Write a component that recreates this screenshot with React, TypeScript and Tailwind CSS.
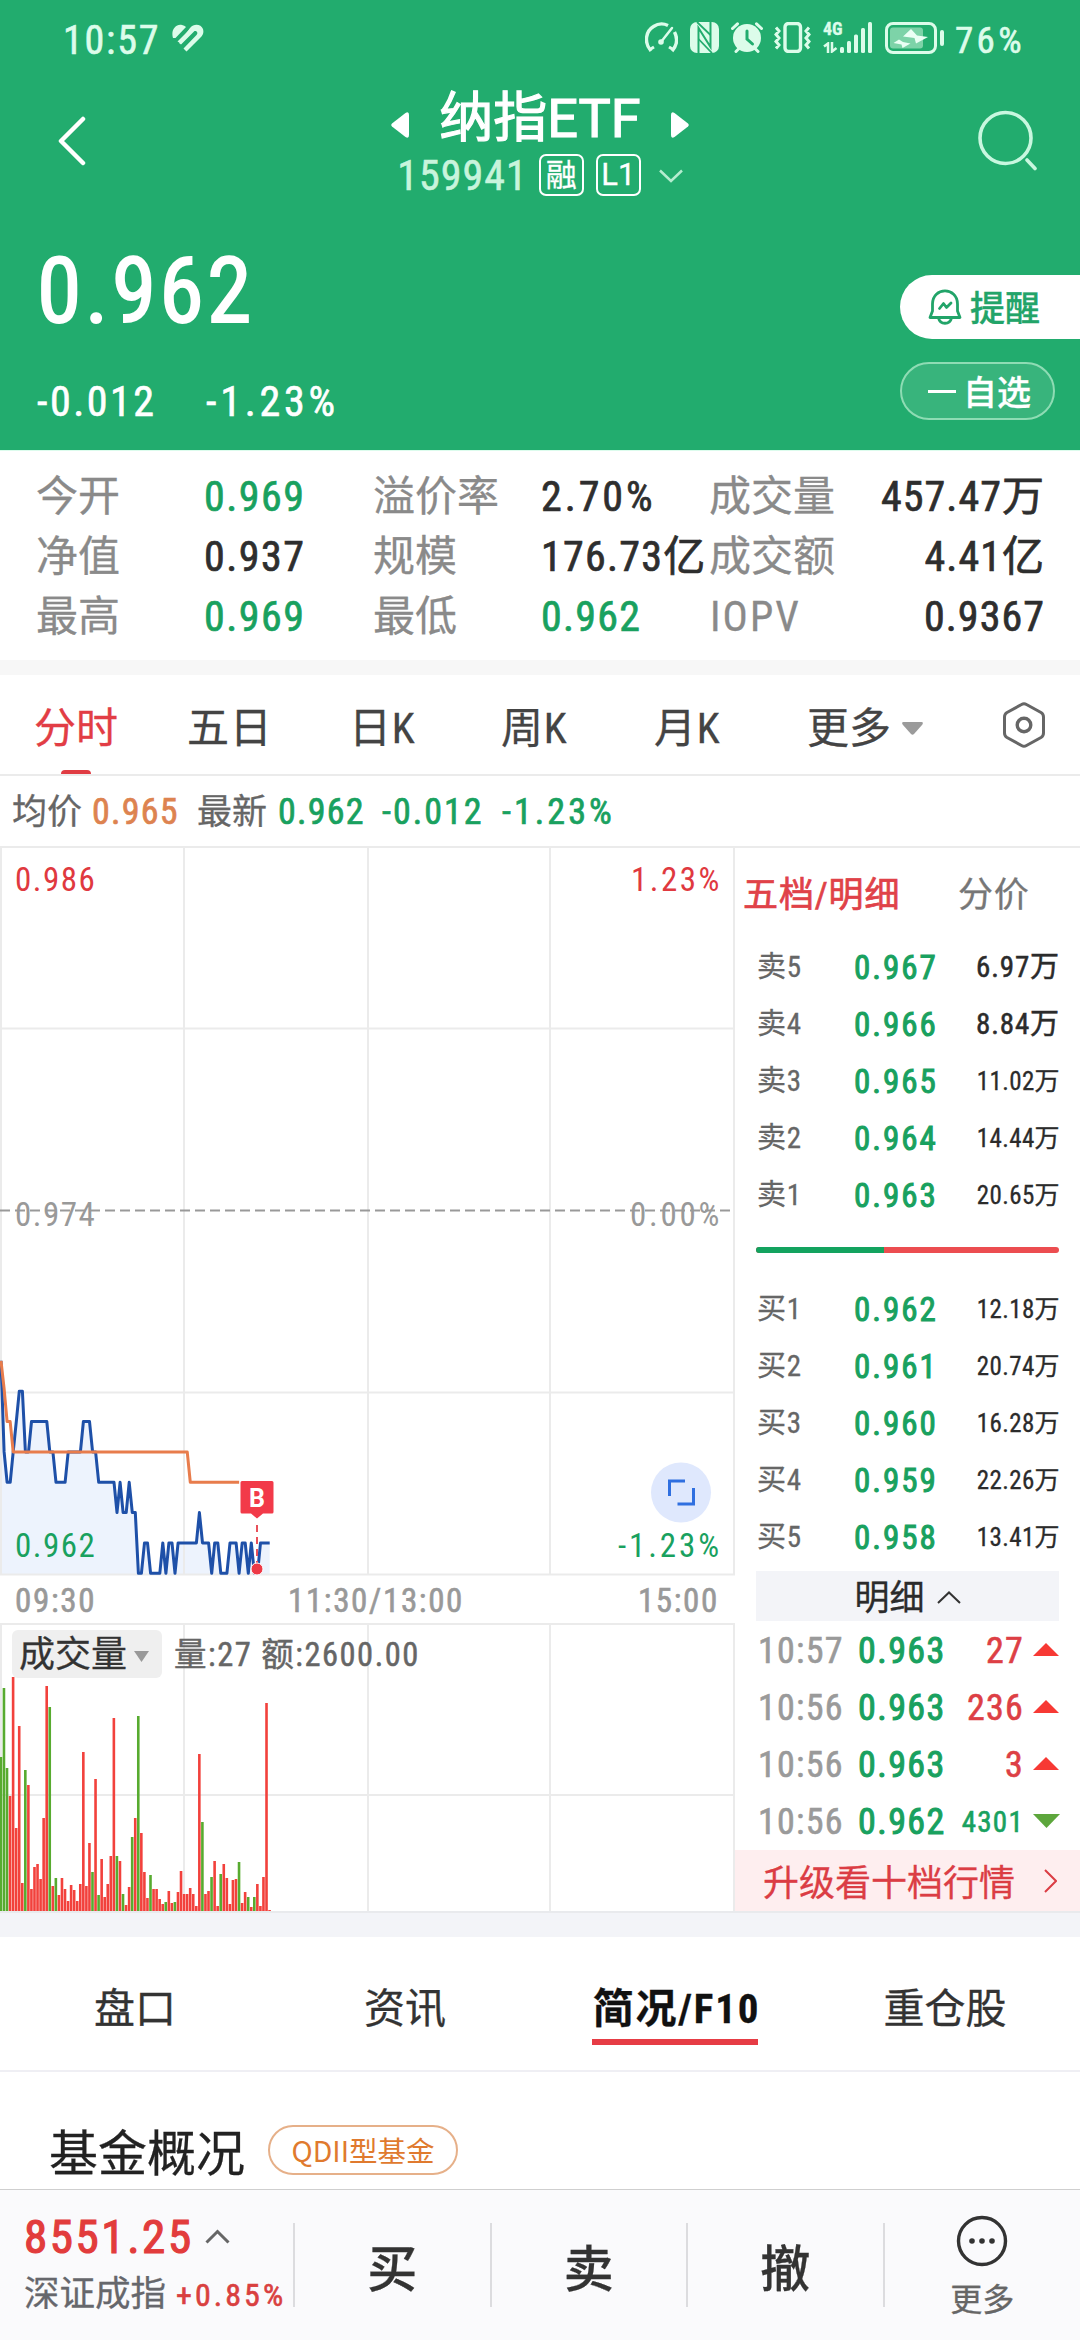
import clsx from "clsx";

const STEP = 3.053;

// price level per minute, 0 = bottom of the chart
const PRICE =
  "7433456644" +
  "5555554433" +
  "3344444555" +
  "4433333323" +
  "2232200110" +
  "0001011011" +
  "1111121110" +
  "1100011101" +
  "101001111";

const AVERAGE: [number, number][] = [
  [0, 7],
  [1, 6.1],
  [2, 5],
  [3, 5],
  [4, 4],
  [61, 4],
  [62, 3],
  [78, 3],
];

// bar height per minute, negative = down (green)
const VOLUME = [
  -154, -223, -143, 115, 234, 83, 185, 28, -141, 126, 22, 44, 47, 32, 93, 225, -204, 25, -33, 16,
  33, 22, 10, 26, 21, 10, 27, 159, 25, 68, -39, 132, -16, 52, 14, 27, 55, 193, -55, 50,
  -17, 6, 24, -74, 93, -195, 78, 39, 13, -36, 22, 22, 12, 7, -9, 20, 8, -9, 19, 40,
  17, 17, 23, 17, 5, 157, -89, 17, 20, -34, 50, 5, -37, 47, 33, 7, 31, 32, -49, 8,
  19, -14, 4, -14, 27, 5, 34, 208, 1,
];

const stats = [
  ["今开", "0.969", true, "溢价率", "2.70%", false, "成交量", "457.47万"],
  ["净值", "0.937", false, "规模", "176.73亿", false, "成交额", "4.41亿"],
  ["最高", "0.969", true, "最低", "0.962", true, "IOPV", "0.9367"],
] as const;

const periods = [
  { label: "五日", width: "w-[162px]" },
  { label: "日K", width: "w-[152px]" },
  { label: "周K", width: "w-[153px]" },
  { label: "月K", width: "w-[153px]" },
];

const sells = [
  ["卖5", "0.967", "6.97万"],
  ["卖4", "0.966", "8.84万"],
  ["卖3", "0.965", "11.02万"],
  ["卖2", "0.964", "14.44万"],
  ["卖1", "0.963", "20.65万"],
];

const buys = [
  ["买1", "0.962", "12.18万"],
  ["买2", "0.961", "20.74万"],
  ["买3", "0.960", "16.28万"],
  ["买4", "0.959", "22.26万"],
  ["买5", "0.958", "13.41万"],
];

const ticks = [
  { time: "10:57", price: "0.963", amount: "27", up: true },
  { time: "10:56", price: "0.963", amount: "236", up: true },
  { time: "10:56", price: "0.963", amount: "3", up: true },
  { time: "10:56", price: "0.962", amount: "4301", up: false },
];

const px = (m: number) => 1 + m * STEP;
const py = (level: number) => 727.3 - level * 30.35;

const StatusBar = () => (
  <div className="flex h-[78px] items-center pl-[63px] pt-[3px] text-[#dcfcea]">
    <span className="w-[109px] text-[40px] tracking-[0.045em] [-webkit-text-stroke:0.6px]">10:57</span>
    <svg className="-mt-[6px]" width="32" height="28" viewBox="0 0 32 28" fill="currentColor">
      <path d="M1 14C-1.500 6 4 -.5 10 1Q12.500 1.500 14 3L3.500 14z" />
      <path d="M5.500 17.500L18 5Q19.500 3.500 20.500 4.500T20.500 7.500L9 19.500z" />
      <path d="M14.500 27.500L11.500 24.500L24.500 11Q26.500 8.500 24 7L22.500 7L9 20.500L7 19L18 4C22 -1 29 0 31 5C32 9 31 11 28.500 13.500z" />
    </svg>
    <div className="-mt-[6px] ml-auto flex items-center">
      <svg width="33" height="31" viewBox="0 0 33 31" fill="none" stroke="currentColor" strokeWidth="3.400">
        <path d="M6 29C-1.500 20 1 9 8.500 4.500C13 1.500 18 1 23 3.500" />
        <path d="M29.500 10C33 17 31.500 24 27 29" />
        <path d="M16 20L27 6" strokeWidth="2.500" strokeLinecap="round" />
        <circle cx="16" cy="20" r="2.800" fill="currentColor" stroke="none" />
        <path d="M4 28l5-3M29 28l-5-3" strokeWidth="3" />
      </svg>
      <svg className="ml-3" width="29" height="31" viewBox="0 0 29 31">
        <rect width="29" height="31" rx="7" fill="currentColor" />
        <path d="M8.500 31V6L20.500 25V0" fill="none" stroke="#22ac6e" strokeWidth="2" />
        <path d="M7 0L20.500 13" fill="none" stroke="#22ac6e" strokeWidth="1.800" />
        <path d="M8.500 17L22 31" fill="none" stroke="#22ac6e" strokeWidth="1.800" />
      </svg>
      <svg className="ml-3" width="32" height="31" viewBox="0 0 32 31" fill="none" stroke="currentColor" strokeWidth="3" strokeLinecap="round">
        <circle cx="16" cy="16" r="14" fill="currentColor" stroke="none" />
        <path d="M1.500 6.500L6.500 1.800M30.500 6.500L25.500 1.800M5 29.500l3-3M27 29.500l-3-3" />
        <path d="M16 9v8l5.500 5" stroke="#22ac6e" />
      </svg>
      <svg className="ml-[11px]" width="37" height="31" viewBox="0 0 37 31" fill="none" stroke="currentColor" strokeWidth="3">
        <rect x="11" y="1.500" width="15.500" height="28" rx="3.500" strokeWidth="3.400" />
        <path d="M2 5.500l3 3.500l-3 3.500l3 3.500l-3 3.500l3 3.500l-3 3.500M35 5.500l-3 3.500l3 3.500l-3 3.500l3 3.500l-3 3.500l3 3.500" />
      </svg>
      <div className="ml-3 flex h-[31px] items-end">
        <div className="flex h-[31px] w-[17px] flex-col justify-between">
          <span className="text-[18px] font-bold leading-[14px]">4G</span>
          <svg width="15" height="11" viewBox="0 0 15 11" fill="none" stroke="currentColor" strokeWidth="2.500">
            <path d="M1 4.500L5 1.500V11M9 0V9.500L13.500 6" />
          </svg>
        </div>
        <svg width="32" height="31" viewBox="0 0 32 31" fill="currentColor">
          <rect x="0" y="25" width="4" height="6" rx="1.500" />
          <rect x="7" y="19" width="4" height="12" rx="1.500" />
          <rect x="14" y="12.500" width="4" height="18.500" rx="1.500" />
          <rect x="21" y="6" width="4" height="25" rx="1.500" />
          <rect x="28" y="0" width="4" height="31" rx="1.500" />
        </svg>
      </div>
      <svg className="ml-[13px]" width="59" height="32" viewBox="0 0 59 32">
        <rect x="1.500" y="1.500" width="49" height="29" rx="6.500" fill="none" stroke="currentColor" strokeWidth="3" />
        <rect x="5" y="5.500" width="33" height="21" rx="3" fill="#7dd3a8" />
        <path d="M26 7L32 13.500L43 15L31 21.500L29.500 16L18 14.500zM14 17.500L18 20L25.500 21.500L17.500 26L16.500 22.500L8.500 21z" fill="#eafff4" />
        <rect x="55" y="8" width="4" height="16" rx="2" fill="currentColor" />
      </svg>
    </div>
    <span className="ml-[11px] w-[125px] text-[37px] tracking-[0.09em] [-webkit-text-stroke:0.6px]">76%</span>
  </div>
);

const Header = () => (
  <header className="h-[450px] shrink-0 bg-[#22ac6e] text-white">
    <StatusBar />
    <div className="flex h-[132px] justify-between pl-[57px] pr-[43px]">
      <svg className="mt-[38px]" width="46" height="50" viewBox="0 0 46 50" fill="none" stroke="currentColor" strokeWidth="4.500" strokeLinecap="round" strokeLinejoin="round">
        <path d="M26 3L4 25L26 47" />
      </svg>
      <div className="flex flex-col items-center pt-[11px]">
        <div className="flex h-[60px] items-center gap-[30px]">
          <svg width="18" height="26" viewBox="0 0 18 26" fill="currentColor" className="mt-[11px]">
            <path d="M14.500 1Q18 -1 18 3V23Q18 27 14.500 25L1 14.500Q-.5 13 1 11.500z" />
          </svg>
          <span className="font-['Roboto','Noto_Sans_CJK_SC',sans-serif] text-[54px] leading-[60px] [-webkit-text-stroke:1.2px]">
            纳指ETF
          </span>
          <svg width="18" height="26" viewBox="0 0 18 26" fill="currentColor" className="mt-[11px]">
            <path d="M3.500 1Q0 -1 0 3V23Q0 27 3.500 25L17 14.500Q18.500 13 17 11.500z" />
          </svg>
        </div>
        <div className="mt-[4px] flex h-[43px] items-center">
          <span className="mr-[11px] mt-[3px] text-[42px] tracking-[0.025em] text-[#c8f4dc] [-webkit-text-stroke:0.6px]">
            159941
          </span>
          <span className="flex h-[42px] w-[45px] items-center justify-center rounded-[7px] border-2 border-white pt-[2px] text-[31px] leading-none">
            融
          </span>
          <span className="ml-3 flex h-[42px] w-[45px] items-center justify-center rounded-[7px] border-2 border-white font-['Roboto'] text-[31px] leading-none">
            L1
          </span>
          <svg className="ml-[18px] mt-[2px]" width="24" height="14" viewBox="0 0 24 14" fill="none" stroke="#b5edd0" strokeWidth="2.500">
            <path d="M1 1.500L12 12L23 1.500" />
          </svg>
        </div>
      </div>
      <svg className="mt-[32px]" width="60" height="62" viewBox="0 0 60 62" fill="none" stroke="#c8f7df" strokeWidth="3.600" strokeLinecap="round">
        <ellipse cx="28.500" cy="28" rx="25.500" ry="25.500" />
        <path d="M50 50L58 58.500" />
      </svg>
    </div>
    <div className="flex justify-between">
      <div className="pl-[37px] pt-[36px]">
        <div className="h-[92px] text-[90px] leading-[92px] tracking-[0.036em] [-webkit-text-stroke:1.8px]">0.962</div>
        <div className="mt-[43px] flex text-[42px] leading-[42px] [-webkit-text-stroke:0.6px]">
          <span className="w-[169px] tracking-[0.06em]">-0.012</span>
          <span className="tracking-[0.09em]">-1.23%</span>
        </div>
      </div>
      <div className="flex flex-col items-start pt-[65px]">
        <button className="flex h-[64px] w-[180px] items-center rounded-l-full bg-white pl-[28px] text-[35px] font-medium text-[#22a469]">
          <svg width="34" height="36" viewBox="0 0 34 36" fill="none" stroke="currentColor" strokeWidth="2.800" strokeLinejoin="round" strokeLinecap="round">
            <path d="M4.500 15C4.500 -2.500 29.500 -2.500 29.500 15V22L32 28.500H2L4.500 22z" />
            <path d="M10.500 29C12 36 22 36 23.500 29" />
            <path d="M11.500 19.500L15.500 14.500L18.500 18.500L23 14" />
          </svg>
          <span className="ml-2 mt-[4px]">提醒</span>
        </button>
        <button className="mt-[23px] flex h-[58px] w-[155px] items-center rounded-full border-2 border-[#8edcb4] bg-[#38b47c] pl-[26px] text-[34px] font-medium">
          <span className="h-[3px] w-[28px] bg-white" />
          <span className="ml-[7px] mt-[4px]">自选</span>
        </button>
      </div>
    </div>
  </header>
);

const Stats = () => (
  <section className="h-[210px] shrink-0 border-t border-[#dcfced] pl-[36px] pr-[35px] pt-[16px]">
    {stats.map(([a, av, aGreen, b, bv, bGreen, c, cv]) => (
      <div
        key={a}
        className="grid h-[60px] grid-cols-[168px_169px_168px_130px_1fr] items-center whitespace-nowrap text-[42px] leading-[60px] text-[#2e2e2e]"
      >
        <span className="text-[#8a8a8a]">{a}</span>
        <span className={clsx("tracking-[0.035em] [-webkit-text-stroke:0.7px]", aGreen && "text-[#19a15f]")}>{av}</span>
        <span className="text-[#8a8a8a]">{b}</span>
        <span
          className={clsx(
            "[-webkit-text-stroke:0.7px]",
            bv.includes("%") ? "tracking-[0.07em]" : "tracking-[0.03em]",
            bGreen && "text-[#19a15f]"
          )}
        >
          {bv}
        </span>
        <span className="flex justify-between pl-[38px]">
          <span className={clsx("text-[#8a8a8a]", c === "IOPV" && "pl-px tracking-[0.05em]")}>{c}</span>
          <span className="tracking-[0.025em] [-webkit-text-stroke:0.7px]">{cv}</span>
        </span>
      </div>
    ))}
  </section>
);

const PeriodTabs = () => (
  <nav className="flex h-[101px] shrink-0 items-center border-b-2 border-[#ebebeb] pl-[34px] text-[42px] text-[#444]">
    <div className="relative flex h-[99px] w-[153px] items-center pt-[8px] text-[#e23d45]">
      分时
      <span className="absolute bottom-0 left-[27px] h-1 w-[30px] rounded-t-sm bg-[#e03c43]" />
    </div>
    {periods.map((p) => (
      <div key={p.label} className={clsx("pt-[8px] tracking-[0.015em]", p.width)}>
        {p.label}
      </div>
    ))}
    <div className="flex w-[196px] items-center pt-[8px]">
      更多
      <svg className="-mt-[1px] ml-[11px]" width="21" height="13" viewBox="0 0 21 13" fill="#9b9b9b">
        <path d="M1.500 0H19.500Q22 0 20 3L12 12Q10.500 13.500 9 12L1 3Q-1 0 1.500 0z" />
      </svg>
    </div>
    <svg width="42" height="46" viewBox="0 0 42 46" fill="none" stroke="#666" strokeWidth="3">
      <path d="M18.500 2.500Q21 1 23.500 2.500L38 10.500Q40.500 12 40.500 15V31Q40.500 34 38 35.500L23.500 43.500Q21 45 18.500 43.500L4 35.500Q1.500 34 1.500 31V15Q1.500 12 4 10.500z" />
      <circle cx="21" cy="23" r="6.800" strokeWidth="3.400" />
    </svg>
  </nav>
);

const Summary = () => (
  <div className="flex h-[70px] shrink-0 items-center pl-[12px] pt-[1px] text-[36px] tracking-[0.035em] text-[#19a15f] [-webkit-text-stroke:0.7px]">
    <span className="w-[80px] pt-[2px] text-[35px] tracking-normal text-[#666] [-webkit-text-stroke:0.3px]">均价</span>
    <span className="w-[105px] text-[#dd8350]">0.965</span>
    <span className="w-[81px] pt-[2px] text-[35px] tracking-normal text-[#666] [-webkit-text-stroke:0.3px]">最新</span>
    <span className="w-[104px]">0.962</span>
    <span className="w-[120px] tracking-[0.055em]">-0.012</span>
    <span className="tracking-[0.085em]">-1.23%</span>
  </div>
);

const PriceChart = () => {
  const line = PRICE.split("")
    .map((level, m) => `${px(m).toFixed(1)},${py(Number(level)).toFixed(1)}`)
    .join(" ");
  const average = AVERAGE.map(([m, level]) => `${px(m)},${py(level)}`).join(" ");

  return (
    <svg width="735" height="728" viewBox="0 2 735 728" className="block">
      <polygon points={`1,728 ${line} ${px(88)},728`} fill="#edf3fd" />
      <g stroke="#ebebeb" strokeWidth="2">
        <path d="M1 0V729M184 0V729M368 0V729M550 0V729M734 0V729" />
        <path d="M0 182.500H735M0 546.500H735M0 728.500H735" />
      </g>
      <path d="M0 364.500H735" stroke="#999" strokeWidth="2" strokeDasharray="10 5" />
      <polyline points={line} fill="none" stroke="#1e50a8" strokeWidth="3" strokeLinejoin="round" />
      <polyline points={average} fill="none" stroke="#e87c4c" strokeWidth="3" strokeLinejoin="round" />
      <path d="M257 679V720" stroke="#e8505a" strokeWidth="2" strokeDasharray="7 5" />
      <circle cx="257" cy="723" r="6" fill="#ee3a47" stroke="#fff" strokeWidth="1" />
      <path d="M242 635H272Q273.500 635 273.500 636.500V666Q273.500 667.500 272 667.500H263L257 672.500L251 667.500H242Q240.500 667.500 240.500 666V636.500Q240.500 635 242 635z" fill="#f23a49" />
      <text x="257" y="660.500" textAnchor="middle" fontSize="25" fontWeight="700" fill="#fff" className="font-['Roboto']">
        B
      </text>
      <circle cx="681" cy="646.500" r="30" fill="#dfe8fd" />
      <path d="M669.500 650V635H685M693.500 642V658H677.500" fill="none" stroke="#2f6fe0" strokeWidth="3" />
      <g fontSize="33" letterSpacing="1.500" className="[-webkit-text-stroke:0.7px]">
        <g fill="#e0393f">
          <text x="15" y="45">0.986</text>
          <text x="722" y="45" textAnchor="end" letterSpacing="2.500">1.23%</text>
        </g>
        <g fill="#999">
          <text x="15" y="380">0.974</text>
          <text x="722" y="380" textAnchor="end" letterSpacing="2.700">0.00%</text>
        </g>
        <g fill="#19a15f">
          <text x="15" y="711">0.962</text>
          <text x="722" y="711" textAnchor="end" letterSpacing="2.900">-1.23%</text>
        </g>
      </g>
    </svg>
  );
};

const VolumeChart = () => (
  <div className="relative">
    <svg width="735" height="288" viewBox="0 0 735 288" className="block">
      <g stroke="#ebebeb" strokeWidth="2">
        <path d="M0 1H735M0 172H735M1 0V288M184 0V288M368 0V288M550 0V288M734 0V288" />
      </g>
      {VOLUME.map((v, m) => (
        <rect
          key={m}
          x={px(m) - 1.4}
          y={288 - Math.abs(v)}
          width="2.600"
          height={Math.abs(v)}
          fill={v > 0 ? "#f2413c" : "#57ab2f"}
        />
      ))}
    </svg>
    <div className="absolute left-3 top-[7px] flex h-[48px] items-center">
      <span className="flex h-[48px] w-[150px] items-center rounded-md bg-[#efefef] pl-[7px] pt-[1px] text-[36px] text-[#333]">
        成交量
        <svg className="ml-[7px] mt-[3px]" width="15" height="11" viewBox="0 0 15 11" fill="#999">
          <path d="M0 0H15L7.500 11z" />
        </svg>
      </span>
      <span className="ml-[12px] mt-[3px] whitespace-nowrap text-[32.500px] tracking-[0.047em] text-[#666] [-webkit-text-stroke:0.5px]">
        量:27 额:2600.00
      </span>
    </div>
  </div>
);

const OrderRow = ({ row }: { row: string[] }) => (
  <div className="flex h-[57px] items-center px-[22px] pt-[1px]">
    <span className="w-[97px] text-[29px] tracking-[0.03em] text-[#666]">{row[0]}</span>
    <span className="text-[33px] tracking-[0.06em] text-[#19a15f] [-webkit-text-stroke:1px]">{row[1]}</span>
    <span
      className={clsx(
        "-mr-[2px] ml-auto text-[#2b2b2b]",
        row[2].length > 5
          ? "text-[25px] tracking-[0.015em]"
          : "text-[29px] tracking-[0.03em] [-webkit-text-stroke:0.5px]"
      )}
    >
      {row[2]}
    </span>
  </div>
);

const OrderBook = () => (
  <aside className="flex w-[345px] flex-col">
    <div className="flex h-[90px] items-center pl-[8px] pt-[4px] text-[35px]">
      <span className="w-[215px] tracking-[0.025em] text-[#e04248] [-webkit-text-stroke:0.7px]">五档/明细</span>
      <span className="tracking-[0.02em] text-[#777]">分价</span>
    </div>
    {sells.map((row) => (
      <OrderRow key={row[0]} row={row} />
    ))}
    <div className="flex h-[57px] items-center px-[21px]">
      <div className="mb-[4px] flex h-[6px] w-full overflow-hidden rounded-full bg-[#ec4d50]">
        <div className="w-[128px] bg-[#13a35f]" />
      </div>
    </div>
    {buys.map((row) => (
      <OrderRow key={row[0]} row={row} />
    ))}
    <div className="mx-[21px] mt-[6px] flex h-[50px] items-center justify-center bg-[#f3f4f8] pt-[4px] text-[35px] text-[#2b2b2b]">
      明细
      <svg className="-mt-[2px] ml-3" width="24" height="13" viewBox="0 0 24 13" fill="none" stroke="#333" strokeWidth="2">
        <path d="M1 12L12 1.500L23 12" />
      </svg>
    </div>
    {ticks.map((t, i) => (
      <div
        key={i}
        className="flex h-[57px] items-center pl-[23px] pr-[20px] pt-[3px] text-[36px] tracking-[0.035em] [-webkit-text-stroke:0.6px]"
      >
        <span className="w-[100px] text-[#9a9a9a]">{t.time}</span>
        <span className="tracking-[0.04em] text-[#19a15f] [-webkit-text-stroke:1px]">{t.price}</span>
        <span
          className={clsx(
            "ml-auto",
            t.up ? "text-[#dd3f45]" : "text-[#19a15f]",
            t.amount.length > 3 && "text-[29px]"
          )}
        >
          {t.amount}
        </span>
        <svg
          className="-mt-[2px] ml-[9px]"
          width="27"
          height="14"
          viewBox="0 0 27 14"
          fill={t.up ? "#f73934" : "#5da63c"}
        >
          <path d={t.up ? "M13 0L26 13H0z" : "M0 0H27L13.500 14z"} />
        </svg>
      </div>
    ))}
    <div className="mt-auto flex h-[61px] items-center bg-[#feeeef] pl-[28px] pr-[23px] pt-[6px] text-[36px] text-[#db3d44]">
      升级看十档行情
      <svg className="-mt-[5px] ml-auto" width="13" height="24" viewBox="0 0 13 24" fill="none" stroke="currentColor" strokeWidth="2">
        <path d="M1 1L12 12L1 23" />
      </svg>
    </div>
  </aside>
);

const SectionTabs = () => (
  <nav className="grid h-[135px] shrink-0 grid-cols-4 border-b-2 border-[#efeff4] text-[41px] text-[#333]">
    {["盘口", "资讯", "简况/F10", "重仓股"].map((tab) => {
      const active = tab === "简况/F10";
      return (
        <div key={tab} className="flex flex-col items-center pt-[45px]">
          <span className={clsx("leading-[54px]", active && "pl-[3px] font-bold tracking-[0.045em] text-[#111]")}>
            {tab}
          </span>
          {active && <span className="mt-[3px] h-[6px] w-[166px] bg-[#e63c45]" />}
        </div>
      );
    })}
  </nav>
);

const TradeBar = () => (
  <footer className="flex h-[151px] shrink-0 items-start border-t border-[#cfcfcf] bg-[#fafafc]">
    <div className="w-[293px] pl-[24px] pt-[21px]">
      <div className="flex h-[50px] items-center text-[47px] tracking-[0.055em] text-[#e23c3c] [-webkit-text-stroke:1.2px]">
        8551.25
        <svg className="ml-[11px]" width="25" height="15" viewBox="0 0 25 15" fill="none" stroke="#666" strokeWidth="3">
          <path d="M1.500 13.500L12.500 2.500L23.500 13.500" />
        </svg>
      </div>
      <div className="mt-[14px] flex h-[40px] items-center whitespace-nowrap text-[#66676c]">
        <span className="text-[35.500px]">深证成指</span>
        <span className="ml-[10px] text-[32px] tracking-[0.095em] text-[#d9403f] [-webkit-text-stroke:0.6px]">+0.85%</span>
      </div>
    </div>
    {["买", "卖", "撤"].map((action) => (
      <div key={action} className="flex h-[150px] w-[196.500px] items-start">
        <span className="mt-[33px] h-[84px] w-[2px] bg-[#dcdcdf]" />
        <span className="flex-1 pt-[50px] text-center text-[50px] font-medium leading-[60px] text-[#333]">{action}</span>
      </div>
    ))}
    <div className="flex h-[150px] flex-1 items-start">
      <span className="mt-[33px] h-[84px] w-[2px] bg-[#dcdcdf]" />
      <div className="flex flex-1 flex-col items-center pt-[25px]">
        <svg width="52" height="52" viewBox="0 0 52 52" fill="#333">
          <circle cx="26" cy="26" r="23.500" fill="none" stroke="#333" strokeWidth="3.400" />
          <circle cx="16" cy="26" r="2.800" />
          <circle cx="26" cy="26" r="2.800" />
          <circle cx="36" cy="26" r="2.800" />
        </svg>
        <span className="mt-[13px] text-[32px] leading-[40px] text-[#666]">更多</span>
      </div>
    </div>
  </footer>
);

export default function App() {
  return (
    <div className="flex h-[2340px] w-[1080px] flex-col overflow-hidden bg-white font-['Roboto_Condensed','Noto_Sans_CJK_SC',sans-serif] leading-none [-webkit-text-stroke:0.3px]">
      <Header />
      <Stats />
      <div className="h-[15px] shrink-0 bg-[#f7f7f7]" />
      <PeriodTabs />
      <Summary />
      <main className="flex h-[1065px] shrink-0 border-t-2 border-[#ebebeb]">
        <div className="w-[735px]">
          <PriceChart />
          <div className="flex h-[47px] items-center justify-between pl-[15px] pr-[16px] pt-[2px] text-[33px] tracking-[0.05em] text-[#999] [-webkit-text-stroke:0.6px]">
            <span>09:30</span>
            <span className="ml-[18px]">11:30/13:00</span>
            <span>15:00</span>
          </div>
          <VolumeChart />
        </div>
        <OrderBook />
      </main>
      <div className="h-[26px] shrink-0 border-t-2 border-[#e9eaed] bg-[#f3f4f8]" />
      <SectionTabs />
      <div className="flex h-[117px] shrink-0 items-center pl-[49px] pt-[40px]">
        <h2 className="pt-[7px] text-[49px] text-[#222]">基金概况</h2>
        <span className="-mt-[1px] ml-[23px] flex h-[50px] w-[190px] items-center justify-center rounded-full border-2 border-[#e6b089] font-['Noto_Sans_CJK_SC',sans-serif] text-[28.500px] leading-none text-[#e07a2e] [-webkit-text-stroke:0]">
          QDII型基金
        </span>
      </div>
      <TradeBar />
    </div>
  );
}
